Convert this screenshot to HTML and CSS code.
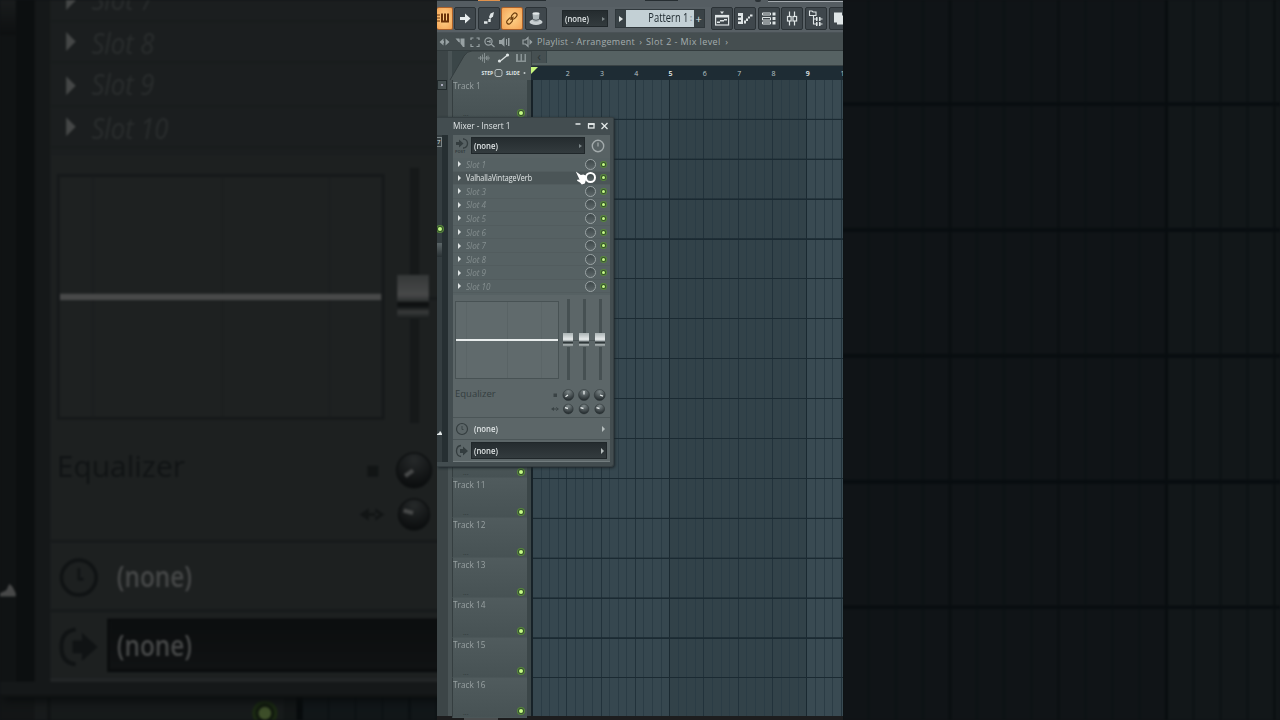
FILE: index.html
```
<!DOCTYPE html>
<html>
  <head>
    <meta charset="utf-8">
    <title>Playlist - Arrangement</title>
    <link rel="stylesheet" href="styles.css">
  </head>
  <body>
    <div class="backdrop" id="backdrop"></div>
    <div class="stage" id="stage">
      <div class="strip">
        <span class="stub s1"></span><span class="stub s2"></span><span class="stub s3"></span><span class="stub s4"></span><span class="dot"></span><span class="stub s5"></span>
      </div>
      <div class="toolbar">
        <div class="tool on first"><svg width="15" height="22" viewBox="0 0 15 22"><g fill="#6b3208"><path d="M0 7h4v1H0zM0 10h4v1H0zM0 13h4v1H0zM5 6h2v7h1V6h2v7h1V6h2v9H5z"/></g></svg></div>
        <div class="tool"><svg viewBox="0 0 22 22"><path d="M6 9.500h5V6l5.500 5-5.500 5v-3.500H6z" fill="#e8edee"/></svg></div>
        <div class="tool"><svg viewBox="0 0 22 22"><path d="M6 15h3.500M11.500 14.500v-3" fill="none" stroke="#dfe5e6" stroke-width="2.400"/><path d="M11 9.500l1.500-3.500 3.500-1.500-1 4.500-3 2.500z" fill="#dfe5e6"/></svg></div>
        <div class="tool on"><svg viewBox="0 0 22 22"><g fill="none" stroke="#704010" stroke-width="1.200"><rect x="-3.300" y="-2.100" width="6.600" height="4.200" rx="2.100" transform="translate(8.600 13.600) rotate(-48)"/><rect x="-3.300" y="-2.100" width="6.600" height="4.200" rx="2.100" transform="translate(13.200 8.400) rotate(-48)"/><path d="M9.500 12.500l3-3.300"/></g></svg></div>
        <div class="tool"><svg viewBox="0 0 22 22"><ellipse cx="11" cy="14.500" rx="6.500" ry="3" fill="#c9d0d2"/><path d="M7.500 6h7l-.8 8q-2.700 1.500-5.400 0z" fill="#aeb7ba"/><ellipse cx="11" cy="6" rx="3.500" ry="1.200" fill="#e2e7e8"/><path d="M8 12q3 1.500 6 0" stroke="#596267" fill="none"/></svg></div>
        <div class="select snap"><span class="none">(none)</span><i class="tri dim"></i></div>
        <div class="pattern">
          <span class="side"><i class="tri"></i></span><span class="lcd"><span>Pattern 1</span><b>:</b></span><span class="side plus">+</span>
        </div>
        <div class="tool"><svg viewBox="0 0 22 22"><path d="M9 4h4l-2 2.500z" fill="#dfe5e6"/><rect x="4.600" y="8" width="13" height="9.500" fill="none" stroke="#dfe5e6" stroke-width="1.200"/><path d="M4 8h14v2H4zM6 14h3v1.500H6zM9 12.500h4V14H9zM13 11.500h3V13h-3z" fill="#dfe5e6"/></svg></div>
        <div class="tool"><svg viewBox="0 0 22 22"><path d="M4 5.500h5v11H4V14h3v-1.500H4V10h3V8.500H4zM10 13h2v3h-2zM12 11h2v2.500h-2zM14 9h2v2h-2zM16 7h2.500v2H16z" fill="#dfe5e6"/></svg></div>
        <div class="tool"><svg viewBox="0 0 22 22"><g fill="none" stroke="#dfe5e6"><path d="M4.500 5.500h8v2h-8zM4.500 10h8v2.500h-8zM4.500 14.500h8v2h-8z"/></g><path d="M14.500 5h3v3h-3zM14.500 9.500h3v3h-3zM14.500 14h3v3h-3z" fill="#dfe5e6"/></svg></div>
        <div class="tool"><svg viewBox="0 0 22 22"><g fill="none" stroke="#dfe5e6" stroke-width="1.200"><path d="M8.500 4v5M8.500 13.500v4.500M13.500 4v5M13.500 13.500v4.500"/><rect x="6.500" y="9" width="3.600" height="4.500"/><rect x="12" y="9" width="3.600" height="4.500"/></g></svg></div>
        <div class="tool"><svg viewBox="0 0 22 22"><g fill="none" stroke="#dfe5e6" stroke-width="1.100"><path d="M4.500 3.500h2.500l1 1h3V8H4.500zM8.500 8v9M8.500 11.500h4M8.500 16.500h4M17.500 11.500h-3M17.500 16.500h-3"/></g><path d="M11 9.500h1.500v4H11zM14 9.500h1.500v4H14zM11 14.500h1.500v4H11zM14 14.500h1.500v4H14z" fill="#dfe5e6"/></svg></div>
        <div class="tool"><svg viewBox="0 0 22 22"><path d="M5 5h8v3h4v9H8v-2H5z" fill="#dfe5e6"/></svg></div>
      </div>
      <div class="titlebar">
        <svg width="96" height="18" viewBox="0 0 96 18">
          <g fill="#98a1a3">
            <path d="M2.500 9l4-3.500v2.500h.5v2h-.5v2.500zM12.500 9l-4-3.500v7z"/>
            <path d="M18.500 5.500h4l.5 4-1.500-.5zM23.500 5.500h4v8.500h-1.500l-2.500-3.500z"/>
            <path d="M62 7h2.500l3-2.800v9.600l-3-2.800H62z"/><path d="M69 6h1v6h-1zM71 5h1.500v8H71zM92.500 6l3 3-3 3z"/>
          </g>
          <g fill="none" stroke="#98a1a3" stroke-width="1.200">
            <path d="M34 7V5h2.500M39.500 5H42v2M42 11v2.500h-2.500M36.500 13.500H34V11"/>
            <circle cx="51.500" cy="8.500" r="3.600"/><path d="M54 11l3.500 3M50 8.500h3M53 7v3"/>
            <path d="M86 7h2.500l2.500-2.300v8.600L88.500 11H86z"/>
          </g>
        </svg>
        <span class="crumb">Playlist - Arrangement</span><i>›</i><span class="crumb second">Slot 2 - Mix level</span><i>›</i>
      </div>
      <div class="playlist">
        <div class="rail"><span class="railbtn"></span></div>
        <div class="names">
          <div class="corner">
            <svg width="81" height="29" viewBox="0 0 81 29">
              <path d="M0 29L14 5q3-5 8-5h59v29z" fill="#4f595a"/>
              <path d="M0 29L14 5q3-5 8-5h59" fill="none" stroke="#343d3f"/>
              <path d="M28 7h12M30.500 5v4M32.500 3.500v7M34.500 2v10M36.500 5v4M38 4.500v5" stroke="#858f90"/>
              <path d="M51 9.500l6-5" stroke="#dfe5e5" stroke-width="1.300"/><circle cx="49.500" cy="10" r="1.600" fill="#dfe5e5"/><circle cx="57.500" cy="4" r="1.600" fill="#dfe5e5"/>
              <path d="M66 3v8h10V3h-1.500v6.500H72V3h-1.500v6.500H68V3z" fill="#8a9495"/>
              <rect x="45" y="18.500" width="7" height="7" rx="2" fill="none" stroke="#b6bebf"/>
              <circle cx="74.500" cy="22" r="1" fill="#c0c8c8"/>
            </svg>
            <span class="step">STEP</span><span class="slide">SLIDE</span>
          </div>
          <div class="tracks" id="tracks"></div>
        </div>
        <div class="lanes">
          <div class="scroll"><span>‹</span></div>
          <div class="ruler" id="ruler"><i></i></div>
          <div class="grid"></div>
        </div>
      </div>
      <div class="bottom"><span></span></div>

      <div class="mixer">
        <div class="caption">
          <span>Mixer - Insert 1</span>
          <svg width="34" height="12" viewBox="0 0 34 12"><g fill="none" stroke="#e3e8e8" stroke-width="1.300"><path d="M-.5 4h5M25.500 3l6 6M31.500 3l-6 6"/><rect x="12.500" y="4" width="5.500" height="4"/><path d="M12 4h6.500" stroke-width="1.800"/></g></svg>
        </div>
        <div class="body">
          <div class="strips">
            <span class="seven">7</span><span class="led"></span><span class="fade"></span>
            <svg class="peak" width="5" height="6" viewBox="0 0 5 6"><path d="M0 4l2-1 1-2 1 1 1 2v1H0z" fill="#e4e9e9"/></svg>
          </div>
          <div class="gutter"></div>
          <div class="panel">
            <div class="row input">
              <div class="post"><svg width="14" height="11" viewBox="0 0 14 11"><path d="M1 4h3V1.500L8.500 5.500 4 9.500V7H1z" fill="#343d3f"/><path d="M8 1h1q3.500 1 3.500 4.500T9 10H8" fill="none" stroke="#343d3f" stroke-width="1.300"/></svg><span>POST</span></div>
              <div class="select"><span class="none">(none)</span><i class="tri dim"></i></div>
              <svg class="clock" width="14" height="14" viewBox="0 0 14 14"><circle cx="7" cy="7" r="5.700" fill="none" stroke="#a3abac" stroke-width="1.400"/><path d="M7 3.500v4" stroke="#a3abac" stroke-width="1.200"/></svg>
            </div>
            <div class="slots" id="slots"></div>
            <div class="eq">
              <div class="curve"></div>
              <div class="faders"><span></span><span></span><span></span></div>
            </div>
            <div class="eqfoot">
              <span class="label">Equalizer</span>
              <svg width="57" height="34" viewBox="0 0 57 34">
                <defs><radialGradient id="knob" cx=".5" cy=".2" r=".8"><stop offset="0" stop-color="#7a8486"/><stop offset="1" stop-color="#20272a"/></radialGradient></defs>
                <path d="M-2 26l3-2v4zM6 26l-3-2v4zM0 25.500h4v1H0zM.5 10.500h3.500v3.500H.5z" fill="#3a4345"/>
                <g fill="url(#knob)" stroke="#2d3537" stroke-width=".5"><circle cx="15.300" cy="12" r="5.500"/><circle cx="31" cy="12" r="5.500"/><circle cx="46.700" cy="12" r="5.500"/><circle cx="15.300" cy="26" r="4.900"/><circle cx="31" cy="26" r="4.900"/><circle cx="46.700" cy="26" r="4.900"/></g>
                <g stroke="#e5eaea" stroke-width="1.300"><path d="M15 12l-2.500 1.800M31 11.500V8M47 12l3 1.200M15 25.500l-3-.8M30.500 25.500l-3-.8M46.500 25.500l-3-.8"/></g>
              </svg>
            </div>
            <div class="row time">
              <svg width="14" height="14" viewBox="0 0 14 14"><circle cx="7" cy="7" r="5.500" fill="none" stroke="#343d3f" stroke-width="1.200"/><path d="M7 4v3.500h1.500" fill="none" stroke="#343d3f" stroke-width=".8"/></svg>
              <div class="plain"><span class="none">(none)</span><i class="tri"></i></div>
            </div>
            <div class="row output">
              <svg width="14" height="14" viewBox="0 0 14 14"><path d="M6 1.500Q1.500 2 1.500 7T6 12.500" fill="none" stroke="#343d3f" stroke-width="1.300"/><path d="M5 5h3V2.500L13 7l-5 4.500V9H5z" fill="#343d3f"/></svg>
              <div class="select"><span class="none">(none)</span><i class="tri"></i></div>
            </div>
          </div>
        </div>
        <svg class="hand" width="16" height="18" viewBox="0 0 16 18"><path d="M.8 1.500l5 3.500 2.500-.5 2.500 1 .5 3.500-1.500 4.500-3 1-1.800-2-3-1.800.6-1.200 2 .3z" fill="#fff"/></svg>
      </div>
    </div>
    <script>
      var html = "";
      for (var i = 1; i <= 16; i++) {
        html += '<div class="track"><span class="thin">Track ' + i + '</span><small>...</small><i class="led"></i></div>';
      }
      document.getElementById("tracks").innerHTML = html;

      html = "";
      for (i = 1; i <= 10; i++) {
        html += '<div class="slot' + (i == 2 ? " used" : "") + '"><i class="tri"></i><span class="thin">' +
          (i == 2 ? "ValhallaVintageVerb" : "Slot " + i) + '</span><b class="ring"></b><i class="led"></i></div>';
      }
      document.getElementById("slots").innerHTML = html;

      html = "";
      for (i = 2; i <= 10; i++) {
        html += "<span>" + i + "</span>";
      }
      document.getElementById("ruler").innerHTML += html;

      // dark enlarged copy behind the stage
      var copy = document.getElementById("stage").cloneNode(true);
      copy.removeAttribute("id");
      document.getElementById("backdrop").appendChild(copy);
    </script>
  </body>
</html>
```
FILE: styles.css
```
* {
  box-sizing: border-box;
}

body {
  margin: 0;
  width: 1280px;
  height: 720px;
  overflow: hidden;
  position: relative;
  display: flex;
  justify-content: center;
  background: #0f1416;
  font-family: "Open Sans", "Noto Sans", sans-serif;
  font-size: 9px;
  color: #dfe4e5;
}

svg {
  display: block;
  flex: none;
  overflow: visible;
}

.backdrop {
  position: absolute;
  left: 0;
  top: 0;
  width: 1280px;
  height: 720px;
  overflow: hidden;
  filter: brightness(.31) blur(.8px);
}

.backdrop .stage {
  transform: scale(3.153);
  transform-origin: 0 360px;
}

.stage {
  position: relative;
  width: 406px;
  height: 720px;
  overflow: hidden;
  display: flex;
  flex-direction: column;
  background: #4a5355;
}

.thin {
  display: inline-block;
  transform: scaleX(.87);
  transform-origin: 0 50%;
  white-space: nowrap;
}

.none {
  transform: scaleX(.86);
  transform-origin: 0 50%;
  font-weight: 600;
}

.tri {
  width: 0;
  height: 0;
  border-left: 4px solid #dfe5e5;
  border-top: 3px solid transparent;
  border-bottom: 3px solid transparent;
}

.tri.dim {
  border-left: 3px solid #7d8789;
  border-top-width: 2px;
  border-bottom-width: 2px;
}

.led {
  display: block;
  width: 4px;
  height: 4px;
  border-radius: 50%;
  background: #c4fa84;
  box-shadow: 0 0 0 1px #35502d, 0 0 0 2px #56873b;
}

/* top bars */
.strip {
  height: 7px;
  flex: none;
  display: flex;
  background: #555d62;
}

.stub {
  height: 1px;
  flex: none;
  background: #272e32;
}

.s1 { width: 41px; }
.s2 { width: 22px; background: #e0924c; }
.s3 { width: 46px; }
.s4 { width: 33px; margin-left: 99px; }
.s5 { width: 75px; height: 2px; margin-left: 7px; border-bottom: 1px solid #a5abb0; }

.dot {
  width: 6px;
  height: 2px;
  flex: none;
  margin-left: 77px;
  border-radius: 0 0 3px 3px;
  background: #2b3236;
}

.toolbar {
  height: 26px;
  flex: none;
  display: flex;
  gap: 1.600px;
  background: #586065;
  border-bottom: 1px solid #4a5256;
}

.tool {
  width: 22px;
  height: 23px;
  flex: none;
  background: #3f474c;
  border: 1px solid #2b3236;
  border-radius: 2px;
}

.tool svg {
  width: 22px;
  height: 23px;
  margin: -1px;
}

.tool.on {
  background: radial-gradient(#ffd58c, #f5a455);
  border-color: #a9602a;
}

.tool.first {
  width: 15.500px;
  border-left: 0;
}

.tool.first svg {
  width: 15px;
}

.select {
  display: flex;
  align-items: center;
  justify-content: space-between;
  background: linear-gradient(#252c2f, #333b3e);
  border: 1px solid #20272a;
  padding: 0 2px;
}

.snap {
  width: 46px;
  height: 17px;
  flex: none;
  margin: 3px 0 0 13.500px;
}

.pattern {
  display: flex;
  width: 90px;
  height: 19px;
  flex: none;
  margin: 2px 4.500px 0 5px;
  border: 1px solid #30383c;
}

.side {
  width: 10px;
  display: flex;
  align-items: center;
  justify-content: center;
  background: #394246;
}

.lcd {
  width: 68px;
  display: flex;
  align-items: center;
  justify-content: flex-end;
  padding-bottom: 2px;
  background: #c3d0d5;
  color: #202b31;
  font-size: 12px;
}

.lcd span {
  transform: scaleX(.78);
  transform-origin: 100% 50%;
  white-space: nowrap;
}

.lcd b {
  width: 5px;
  color: #87949a;
  font-size: 9px;
  text-align: center;
}

.plus {
  padding-bottom: 1px;
  font-size: 11px;
}

.titlebar {
  height: 18px;
  flex: none;
  display: flex;
  align-items: center;
  background: #454e50;
  border-bottom: 1px solid #333c3e;
  color: #a4adae;
}

.titlebar i {
  width: 11px;
  text-align: center;
  font-style: normal;
}

.crumb {
  width: 98px;
  margin-left: 4px;
  white-space: nowrap;
  letter-spacing: .25px;
}

.crumb.second {
  width: 75px;
  margin-left: 0;
  letter-spacing: .4px;
}

/* playlist */
.playlist {
  flex: 1;
  min-height: 0;
  display: flex;
}

.rail {
  width: 15px;
  background: #3c4547;
  border-right: 4px solid #4a5456;
  padding-top: 29px;
}

.railbtn {
  display: block;
  width: 10px;
  height: 10px;
  border: 1px solid #222a2c;
  background: radial-gradient(#aab 15%, #465052 20%);
}

.names {
  width: 79px;
  background: #3b4648;
}

.corner {
  position: relative;
  height: 29px;
  font-size: 5px;
  font-weight: bold;
}

.corner svg {
  margin-left: -2px;
}

.step {
  position: absolute;
  left: 29.500px;
  top: 19px;
}

.slide {
  position: absolute;
  left: 54px;
  top: 19px;
}

.track {
  position: relative;
  width: 75px;
  height: 39.900px;
  padding-top: 1px;
  background: linear-gradient(#505b5d, #475254);
  border-left: 1px solid #353e40;
  border-bottom: 1px solid #4b5658;
  color: #98a1a2;
  font-size: 9.500px;
  line-height: 12px;
}

.track:first-child {
  height: 39.400px;
  padding-top: 0;
}

.track small {
  position: absolute;
  left: 10px;
  bottom: 0;
  color: #2d3638;
  font-size: 7px;
  line-height: 8px;
}

.track .led {
  position: absolute;
  right: 4.500px;
  bottom: 3.500px;
}

.lanes {
  width: 312px;
  display: flex;
  flex-direction: column;
}

.scroll {
  height: 15px;
  background: #566263;
  border: solid #3a4345;
  border-width: 0 0 1px 1px;
}

.scroll span {
  display: block;
  width: 15px;
  line-height: 12px;
  font-size: 12px;
  text-align: center;
  color: #2d3638;
  background: #465052;
  border-right: 1px solid #39474a;
}

.ruler {
  position: relative;
  height: 14px;
  display: flex;
  padding-left: 19.500px;
  background: #1e2c34;
  color: #b9c4c8;
  font-size: 7px;
  line-height: 15px;
}

.ruler span {
  width: 34.300px;
  flex: none;
  text-align: center;
}

.ruler span:nth-of-type(4),
.ruler span:nth-of-type(8) {
  color: #eef2f3;
  font-weight: 600;
}

.ruler span:last-child {
  padding-left: 5px;
}

.ruler i {
  position: absolute;
  left: 0;
  top: 1px;
  border-top: 7px solid #c6f57c;
  border-right: 7px solid transparent;
}

.grid {
  flex: 1;
  border-left: 2px solid #172228;
  background:
    repeating-linear-gradient(transparent 0 38.400px, #1b2a32 38.900px 39.900px),
    repeating-linear-gradient(90deg, transparent 0 136.200px, #1a2931 136.200px 137.200px),
    repeating-linear-gradient(90deg, transparent 0 33.300px, #22323b 33.300px 34.300px),
    repeating-linear-gradient(90deg, transparent 0 7.575px, #2b3c45 7.575px 8.575px),
    linear-gradient(90deg, #36474f 137px, #324249 137px 274px, #394a52 274px);
}

.bottom {
  height: 4px;
  flex: none;
  background: #1d1d1e;
}

.bottom span {
  display: block;
  width: 34px;
  height: 4px;
  margin-left: 27px;
  background: #4a4d4e;
}

/* mixer window */
.mixer {
  position: absolute;
  left: 0;
  top: 117px;
  width: 177px;
  height: 350px;
  background: #434d50;
  border: solid #363f42;
  border-width: 1px 1px 1px 0;
  border-radius: 0 2px 3px 0;
  box-shadow: 1px 1px 3px #1c2529;
}

.caption {
  height: 17px;
  display: flex;
  align-items: center;
  justify-content: space-between;
  padding: 0 3px 2px 15.500px;
  font-weight: 500;
}

.caption span {
  transform: scaleX(.91);
  transform-origin: 0 50%;
}

.body {
  display: flex;
  height: 327px;
}

.strips {
  position: relative;
  width: 5px;
  background: #343d40;
}

.gutter {
  width: 6px;
  margin-right: 5px;
  background: #262f32;
}

.seven {
  position: absolute;
  left: 0;
  top: 2px;
  width: 5px;
  height: 10px;
  border: 1px solid #7b8587;
  border-left: 0;
  font-size: 6px;
  line-height: 8px;
}

.strips .led {
  position: absolute;
  left: 1px;
  top: 92px;
}

.fade {
  position: absolute;
  left: 0;
  top: 108px;
  width: 5px;
  height: 14px;
  background: linear-gradient(#5c6668, #2a3235);
}

.peak {
  position: absolute;
  left: 0;
  top: 295px;
}

.panel {
  width: 157px;
  background: #5c6668;
  border-bottom: 1px solid #727c7e;
}

.row {
  display: flex;
  align-items: center;
  padding-left: 2px;
}

.input {
  height: 23px;
  padding-bottom: 2px;
  background: #586264;
}

.post {
  width: 16px;
  font-size: 4px;
  line-height: 5px;
  font-weight: bold;
  color: #343d3f;
}

.post span {
  display: block;
}

.input .select {
  width: 114px;
  height: 17px;
}

.clock {
  margin-left: 5.500px;
}

.slots {
  background: #566163;
  padding-bottom: 2px;
}

.slot {
  height: 13.560px;
  display: flex;
  align-items: center;
  padding: 0 5.500px 0 5px;
  border-bottom: 1px solid #525c5e;
  color: #858f90;
  font-style: italic;
}

.slot .tri {
  border-left-width: 3.500px;
  border-top-width: 3px;
  border-bottom-width: 3px;
}

.slot .thin {
  flex: 1;
  margin-left: 5px;
  transform: scaleX(.9);
}

.slot.used {
  color: #e6ebeb;
  font-style: normal;
  background: #4b5557;
}

.slot.used .thin {
  transform: scaleX(.79);
  font-weight: 500;
}

.ring {
  width: 11px;
  height: 11px;
  margin-right: 6px;
  border: 1.500px solid #9aa3a4;
  border-radius: 50%;
  background: linear-gradient(#3e484a, #5d6769);
}

.used .ring {
  border: 2px solid #fff;
}

.slot .led {
  width: 3px;
  height: 3px;
}

.eq {
  display: flex;
  padding: 6px 0 0 2px;
  height: 88px;
}

.curve {
  width: 104px;
  height: 78px;
  border: 1px solid #485254;
  background:
    linear-gradient(#e9eded, #e9eded) 0 37px / 100% 2px no-repeat,
    linear-gradient(90deg, transparent 10px, #5b6567 10px 11px, transparent 11px 51px, #596365 51px 52px, transparent 52px 85px, #5b6567 85px 86px, transparent 86px),
    #606a6c;
}

.faders {
  display: flex;
  gap: 6px;
  margin: -2px 0 0 4px;
  height: 81px;
  background: linear-gradient(#4b5557, #4b5557) 5px 41px / 32px 1px no-repeat;
}

.faders span {
  width: 10px;
  background:
    linear-gradient(#aab3b4, #e6eaea 45%, #98a1a3 58%, #262e30 64%, #394244 72%, #b5bdbd 84%, #4a5456) 0 34px / 10px 14px no-repeat,
    linear-gradient(#465052, #465052) 50% 0 / 3px 100% no-repeat;
}

.eqfoot {
  display: flex;
  height: 34px;
  padding-left: 2px;
  justify-content: space-between;
}

.label {
  padding-top: 4px;
  font-size: 9.500px;
  font-weight: 500;
  color: #343e40;
}

.time {
  height: 23px;
  border-top: 1px solid #4b5557;
  border-bottom: 1px solid #4b5557;
}

.time svg,
.output svg {
  margin-right: 2px;
}

.plain {
  width: 136px;
  display: flex;
  align-items: center;
  justify-content: space-between;
  padding: 0 2px 0 3px;
}

.output {
  height: 21px;
}

.output .select {
  width: 136px;
  height: 17px;
}

.plain .tri,
.output .tri {
  border-left: 3px solid #b5bdbd;
}

.hand {
  position: absolute;
  left: 138px;
  top: 52px;
}
```
